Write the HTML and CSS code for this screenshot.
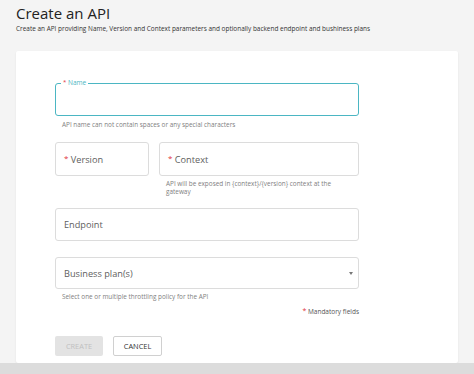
FILE: index.html
```html
<!DOCTYPE html>
<html lang="en">
<head>
    <meta charset="UTF-8">
    <title>Create an API</title>
    <link rel="stylesheet" href="styles.css">
</head>
<body>
    <div class="page">
        <h1>Create an API</h1>
        <p class="subtitle">Create an API providing Name, Version and Context parameters and optionally backend endpoint and bushiness plans</p>
        <div class="card">
            <form class="api-form">
                <div class="field field-active">
                    <span class="float-label"><span class="req">*</span> Name</span>
                </div>
                <div class="helper">API name can not contain spaces or any special characters</div>

                <div class="row">
                    <div class="col-version">
                        <div class="field"><span><span class="req">*</span> Version</span></div>
                    </div>
                    <div class="col-context">
                        <div class="field"><span><span class="req">*</span> Context</span></div>
                        <div class="helper">API will be exposed in {context}/{version} context at the gateway</div>
                    </div>
                </div>

                <div class="field field-endpoint">Endpoint</div>

                <div class="field field-plans">
                    Business plan(s)
                    <span class="caret"></span>
                </div>
                <div class="helper">Select one or multiple throttling policy for the API</div>

                <div class="mandatory"><span class="req">*</span> Mandatory fields</div>

                <div class="actions">
                    <button type="button" class="btn btn-create" disabled>CREATE</button>
                    <button type="button" class="btn btn-cancel">CANCEL</button>
                </div>
            </form>
        </div>
    </div>
    <div class="bottom-bar"></div>
</body>
</html>
```

FILE: styles.css
```css
body {
    margin: 0;
    padding: 0;
    background: #f4f4f4;
    font-family: 'Open Sans', 'Liberation Sans', sans-serif;
    color: #333;
    width: 474px;
    height: 374px;
    overflow: hidden;
}

.page {
    padding: 0 16px;
    height: 363px;
}

h1 {
    margin: 0;
    padding-top: 4px;
    font-size: 15px;
    line-height: 19px;
    font-weight: 400;
    color: #222;
}

.subtitle {
    margin: 1px 0 0;
    font-size: 6.45px;
    line-height: 10px;
    color: #333;
}

.card {
    margin-top: 17px;
    width: 442px;
    height: 312px;
    box-sizing: border-box;
    background: #fff;
    border-radius: 2px;
    box-shadow: 0 1px 2px rgba(0, 0, 0, 0.08);
    padding: 32px 0 0 39px;
}

.api-form {
    width: 304px;
}

.field {
    position: relative;
    height: 34px;
    box-sizing: border-box;
    border: 1px solid #dcdcdc;
    border-radius: 3px;
    padding: 0 8px;
    display: flex;
    align-items: center;
    font-size: 9.2px;
    color: #606060;
}

.field-active {
    height: 33px;
    border: 1.5px solid #4bb6c3;
}

.float-label {
    position: absolute;
    top: -5px;
    left: 5px;
    padding: 0 2px;
    background: #fff;
    font-size: 6.5px;
    line-height: 8px;
    color: #4bb6c3;
}

.req {
    color: #e0303a;
    font-size: 8px;
    position: relative;
    top: -2px;
}

.float-label .req {
    font-size: 6px;
    top: -1px;
}

.helper {
    margin-top: 5px;
    padding-left: 7px;
    font-size: 6.4px;
    line-height: 8px;
    color: #808080;
}

.row {
    display: flex;
    gap: 10px;
    margin-top: 13px;
}

.col-version {
    width: 94px;
}

.col-context {
    flex: 1;
}

.col-context .helper {
    margin-top: 4px;
    padding-right: 20px;
}

.field-endpoint {
    margin-top: 12px;
    height: 33px;
}

.field-plans {
    margin-top: 16px;
    height: 32px;
}

.field-plans + .helper {
    margin-top: 4px;
}

.caret {
    position: absolute;
    right: 5px;
    top: 14px;
    width: 0;
    height: 0;
    border-left: 2.5px solid transparent;
    border-right: 2.5px solid transparent;
    border-top: 3px solid #777;
}

.mandatory {
    margin-top: 7px;
    text-align: right;
    font-size: 6.5px;
    line-height: 8px;
    color: #555;
}

.mandatory .req {
    font-size: 7px;
    top: -1px;
}

.actions {
    display: flex;
    gap: 10px;
    margin-top: 20px;
}

.btn {
    height: 20px;
    border-radius: 2px;
    font-family: 'Open Sans', 'Liberation Sans', sans-serif;
    font-size: 7.4px;
    padding: 0;
    cursor: pointer;
}

.btn-create {
    width: 48px;
    border: none;
    background: #e3e3e3;
    color: #c0c0c0;
}

.btn-cancel {
    width: 49px;
    border: 1px solid #d0d0d0;
    background: #fff;
    color: #333;
}

.bottom-bar {
    height: 11px;
    background: #dcdcdc;
}
```
